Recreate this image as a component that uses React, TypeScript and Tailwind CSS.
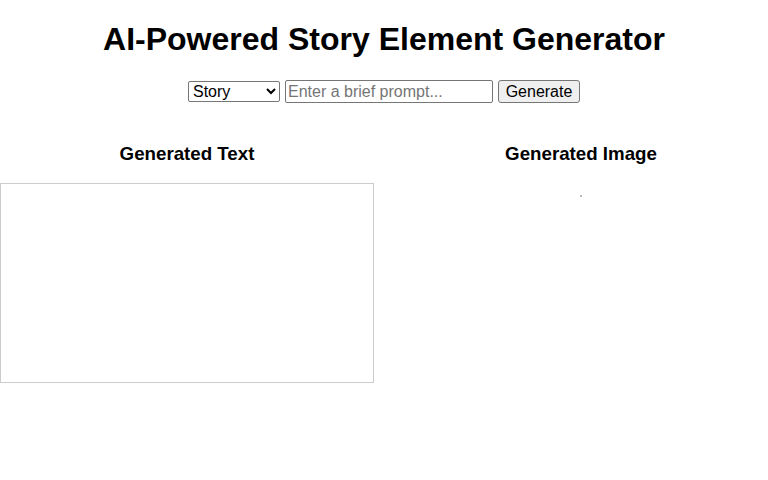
import React, { useState } from 'react';

const ELEMENT_TYPES = ['Story', 'Character', 'Setting', 'Plot'];

export default function App() {
  const [kind, setKind] = useState('Story');
  const [prompt, setPrompt] = useState('');
  const [text, setText] = useState('');

  return (
    <div className="min-h-screen bg-white text-black font-['Liberation_Sans',Arial,sans-serif] text-[16px]">
      <h1 className="text-center text-[32px] font-bold leading-[37px] pt-[21px] pb-[22px]">
        AI-Powered Story Element Generator
      </h1>

      {/* Controls */}
      <div className="flex items-center justify-center gap-[5px] mb-[22px]">
        <select
          value={kind}
          onChange={(e) => setKind(e.target.value)}
          className="w-[92px] h-[21px] border border-[#767676] rounded-[2px] bg-white text-[16px] leading-[19px]"
        >
          {ELEMENT_TYPES.map((t) => (
            <option key={t}>{t}</option>
          ))}
        </select>
        <input
          type="text"
          value={prompt}
          onChange={(e) => setPrompt(e.target.value)}
          placeholder="Enter a brief prompt..."
          className="w-[208px] h-[23px] border border-[#767676] rounded-[2px] px-[2px] text-[16px] placeholder:text-[#757575]"
        />
        <button className="w-[82px] h-[23px] border border-[#767676] rounded-[3px] bg-[#efefef] px-[6px] text-[16px] leading-[19px]">
          Generate
        </button>
      </div>

      {/* Output columns */}
      <div className="flex gap-[20px]">
        <div className="flex-1 flex flex-col">
          <h3 className="text-center text-[18.72px] font-bold leading-[22px] my-[18px]">
            Generated Text
          </h3>
          <textarea
            value={text}
            onChange={(e) => setText(e.target.value)}
            className="w-full h-[200px] border border-[#cccccc] resize-none"
          />
        </div>
        <div className="flex-1 flex flex-col">
          <h3 className="text-center text-[18.72px] font-bold leading-[22px] my-[18px]">
            Generated Image
          </h3>
          <div className="mx-auto mt-[12px] w-[2px] h-[2px] border border-[#bbbbbb]" />
        </div>
      </div>
    </div>
  );
}
